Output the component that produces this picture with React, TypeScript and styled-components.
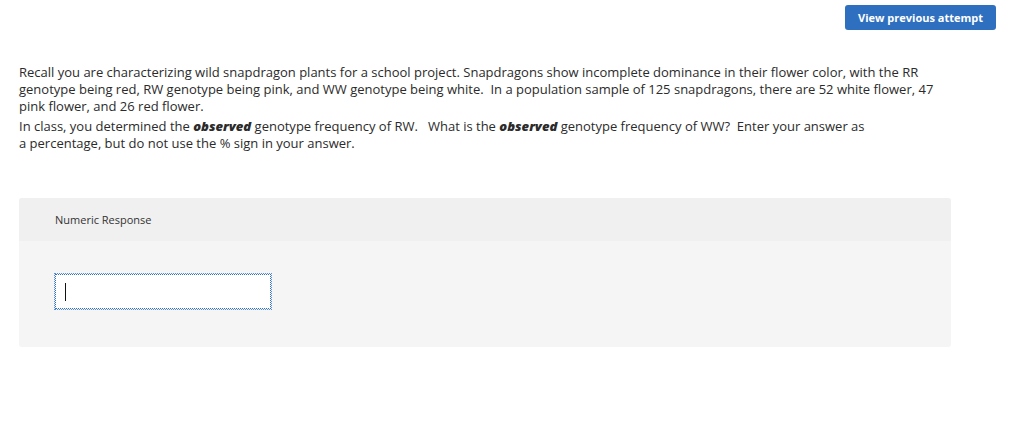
import React from "react";
import styled, { createGlobalStyle } from "styled-components";

const GlobalStyle = createGlobalStyle`
  html, body {
    margin: 0;
    padding: 0;
    background: #ffffff;
  }
  body {
    font-family: "Open Sans", "Lato", sans-serif;
    color: #2b2b2b;
  }
`;

const Page = styled.div`
  width: 1024px;
  height: 424px;
  box-sizing: border-box;
  padding: 5px 28px 0 19px;
  display: flex;
  flex-direction: column;
`;

const TopBar = styled.div`
  display: flex;
  justify-content: flex-end;
`;

const AttemptButton = styled.button`
  height: 25px;
  padding: 0 13px;
  border: none;
  border-radius: 3px;
  background: #2f6fbf;
  color: #ffffff;
  font-family: "Open Sans", "Lato", sans-serif;
  font-weight: 700;
  font-size: 11px;
  cursor: pointer;
`;

const Question = styled.div`
  width: 932px;
  margin-top: 34px;
  font-size: 13px;
  line-height: 17px;
`;

const Para = styled.p<{ $gap?: number }>`
  margin: ${(p) => p.$gap ?? 0}px 0 0 0;
`;

const Strong = styled.em`
  font-weight: 800;
  font-style: italic;
`;

const Panel = styled.section`
  width: 932px;
  margin-top: 46px;
  border-radius: 3px;
  overflow: hidden;
  background: #f5f5f5;
`;

const PanelHeader = styled.div`
  height: 43px;
  background: #f0f0f0;
  display: flex;
  align-items: center;
  padding-left: 36px;
  font-size: 11px;
  color: #333;
`;

const PanelBody = styled.div`
  height: 106px;
  padding: 33px 0 0 36px;
  box-sizing: border-box;
`;

const AnswerField = styled.div`
  width: 216px;
  height: 35px;
  box-sizing: border-box;
  background: #ffffff;
  border: 1px dotted #2f6fcf;
  outline: 1px dotted #5a8fd8;
  display: flex;
  align-items: center;
  padding-left: 9px;
`;

const Caret = styled.span`
  width: 1px;
  height: 18px;
  background: #111;
`;

export default function App() {
  return (
    <>
      <GlobalStyle />
      <Page>
        <TopBar>
          <AttemptButton>View previous attempt</AttemptButton>
        </TopBar>
        <Question>
          <Para>
            Recall you are characterizing wild snapdragon plants for a school project. Snapdragons show
            incomplete dominance in their flower color, with the RR genotype being red, RW genotype being
            pink, and WW genotype being white.&nbsp; In a population sample of 125 snapdragons, there are 52
            white flower, 47 pink flower, and 26 red flower.
          </Para>
          <Para $gap={3}>
            In class, you determined the <Strong>observed</Strong> genotype frequency of RW.&nbsp;&nbsp; What
            is the <Strong>observed</Strong> genotype frequency of WW?&nbsp; Enter your answer as
            <br />a percentage, but do not use the % sign in your answer.
          </Para>
        </Question>
        <Panel>
          <PanelHeader>Numeric Response</PanelHeader>
          <PanelBody>
            <AnswerField>
              <Caret />
            </AnswerField>
          </PanelBody>
        </Panel>
      </Page>
    </>
  );
}
